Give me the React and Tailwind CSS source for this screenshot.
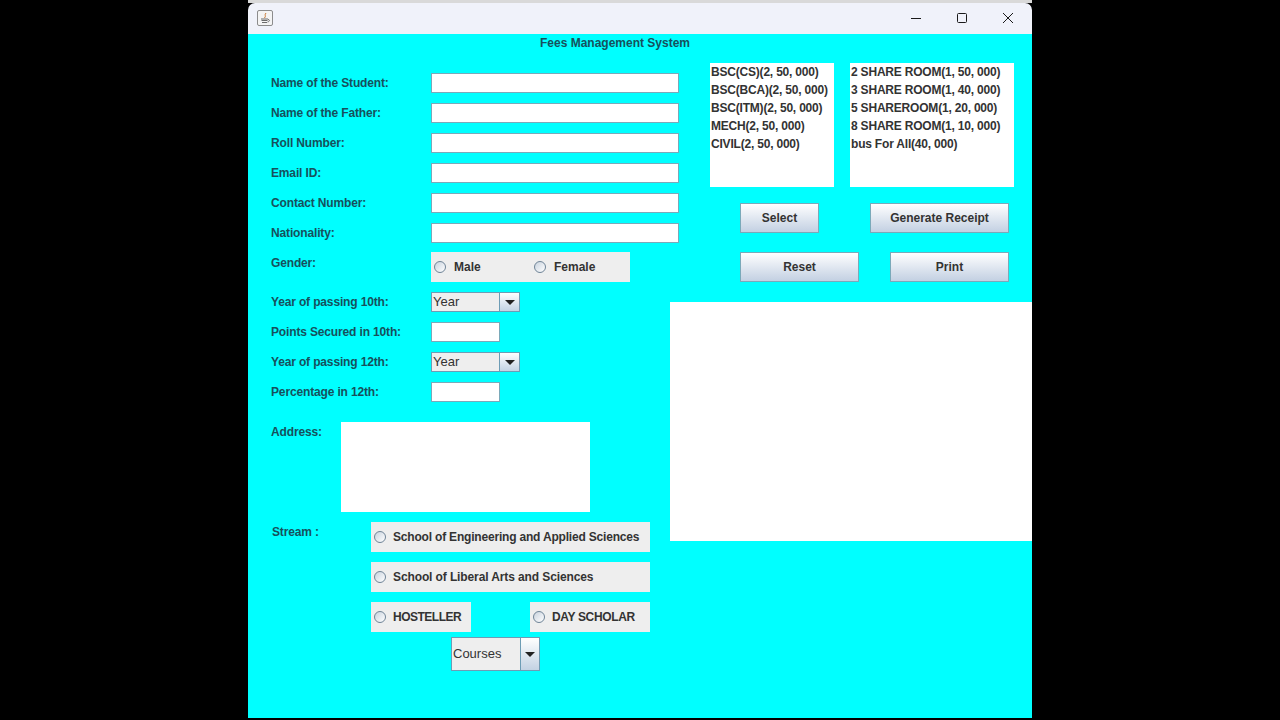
const labelClass = 'text-[12px] tracking-[-0.15px] font-bold text-[#17505c]';

function Radio() {
  return <span className="w-[12px] h-[12px] rounded-full border border-[#6f8497] bg-gradient-to-br from-[#c9d3de] to-white shrink-0" />;
}

function RadioPanel({ label, className }) {
  return (
    <div className={`h-[30px] bg-[#eeeeee] flex items-center gap-[7px] pl-[3px] text-[12px] font-bold text-[#333] ${className}`}>
      <Radio />
      <span>{label}</span>
    </div>
  );
}

function TextBox({ className }) {
  return <input readOnly className={`h-[20px] shrink-0 bg-white border border-[#7aa9b9] outline-none ${className}`} />;
}

function Combo({ label, className, arrowClass }) {
  return (
    <div className={`flex shrink-0 border border-[#6d9cb5] bg-[#eeeeee] text-[#333] ${className}`}>
      <span className="flex-1 flex items-center pl-[1px] text-[13px]">{label}</span>
      <span className={`flex items-center justify-center border-l border-[#6d9cb5] bg-gradient-to-b from-white to-[#c3d2e3] ${arrowClass}`}>
        <span className="w-0 h-0 border-x-[5px] border-x-transparent border-t-[5px] border-t-[#222]" />
      </span>
    </div>
  );
}

function FormRow({ label, children, className = 'mb-[10px]' }) {
  return (
    <div className={`flex items-center h-[20px] ${className}`}>
      <label className={`w-[160px] shrink-0 ${labelClass}`}>{label}</label>
      {children}
    </div>
  );
}

function JButton({ label, className }) {
  return (
    <button className={`h-[30px] border border-[#7aa9b9] bg-gradient-to-b from-white to-[#c3d0e2] text-[12px] font-bold text-[#333] ${className}`}>
      {label}
    </button>
  );
}

function ListBox({ items, className }) {
  return (
    <div className={`h-[124px] bg-white pl-[1px] text-[12px] tracking-[-0.2px] font-bold text-[#333] ${className}`}>
      {items.map((item) => (
        <div key={item} className="h-[18px] leading-[18px] whitespace-nowrap">{item}</div>
      ))}
    </div>
  );
}

export default function App() {
  return (
    <div className="w-[1280px] h-[720px] bg-black overflow-hidden font-['Liberation_Sans',Arial,sans-serif]">
      <div className="w-[784px] h-[718px] ml-[248px] flex flex-col">
        <div className="h-[3px] bg-[#d9d9d9]" />

        {/* title bar */}
        <div className="h-[31px] bg-[#f0f2fa] rounded-t-[7px] flex items-center justify-between">
          <div className="ml-[9px] mb-[2px] w-[16px] h-[16px] rounded-[2px] border border-[#8c8c8c] bg-[#f4f4f4] flex items-center justify-center">
            <svg width="12" height="12" viewBox="0 0 12 12" fill="none" stroke="#6b6b6b" strokeWidth="1">
              <path d="M7 1C5 3 7.500 4 5.500 6" stroke="#c8742c" />
              <path d="M2 7h7M2.500 8.500h6M3 10.500h5M9 7.500c2 0 2 2-.5 2.500" />
            </svg>
          </div>
          <div className="flex items-center mr-[1px] mb-[2px]">
            <span className="w-[46px] flex justify-center">
              <svg width="12" height="12" viewBox="0 0 12 12" stroke="#1a1a1a" strokeWidth="1"><path d="M1 6.500h10" /></svg>
            </span>
            <span className="w-[46px] flex justify-center">
              <svg width="12" height="12" viewBox="0 0 12 12" fill="none" stroke="#1a1a1a" strokeWidth="1"><rect x="1.500" y="1.500" width="9" height="9" rx="1" /></svg>
            </span>
            <span className="w-[46px] flex justify-center">
              <svg width="12" height="12" viewBox="0 0 12 12" stroke="#1a1a1a" strokeWidth="1"><path d="M1 1l10 10M11 1L1 11" /></svg>
            </span>
          </div>
        </div>

        {/* content */}
        <div className="flex-1 bg-[#00ffff]">
          <div className="w-[734px] h-[18px] leading-[18px] text-center text-[12px] font-bold text-[#17505c]">Fees Management System</div>

          <div className="flex">
            {/* form */}
            <div className="w-[422px] shrink-0 pl-[23px] pt-[21px]">
              <FormRow label="Name of the Student:"><TextBox className="w-[248px]" /></FormRow>
              <FormRow label="Name of the Father:"><TextBox className="w-[248px]" /></FormRow>
              <FormRow label="Roll Number:"><TextBox className="w-[248px]" /></FormRow>
              <FormRow label="Email ID:"><TextBox className="w-[248px]" /></FormRow>
              <FormRow label="Contact Number:"><TextBox className="w-[248px]" /></FormRow>
              <FormRow label="Nationality:" className="mb-[9px]"><TextBox className="w-[248px]" /></FormRow>

              <div className="flex h-[30px] mb-[10px]">
                <label className={`w-[160px] shrink-0 pt-[2px] ${labelClass}`}>Gender:</label>
                <div className="w-[199px] h-[30px] bg-[#eeeeee] flex items-center pl-[3px] text-[12px] font-bold text-[#333]">
                  <Radio />
                  <span className="ml-[8px] w-[80px]">Male</span>
                  <Radio />
                  <span className="ml-[8px]">Female</span>
                </div>
              </div>

              <FormRow label="Year of passing 10th:"><Combo label="Year" className="w-[89px] h-[20px]" arrowClass="w-[20px]" /></FormRow>
              <FormRow label="Points Secured in 10th:"><TextBox className="w-[69px]" /></FormRow>
              <FormRow label="Year of passing 12th:"><Combo label="Year" className="w-[89px] h-[20px]" arrowClass="w-[20px]" /></FormRow>
              <FormRow label="Percentage in 12th:" className="mb-[20px]"><TextBox className="w-[69px]" /></FormRow>

              <div className="flex h-[90px] mb-[10px]">
                <label className={`w-[70px] shrink-0 pt-[1px] ${labelClass}`}>Address:</label>
                <div className="w-[249px] h-[90px] bg-white" />
              </div>

              <div className="flex">
                <label className={`w-[100px] shrink-0 pl-[1px] pt-[1px] ${labelClass}`}>Stream :</label>
                <div className="w-[279px] flex flex-col gap-[10px]">
                  <RadioPanel label="School of Engineering and Applied Sciences" className="tracking-[-0.19px]" />
                  <RadioPanel label="School of Liberal Arts and Sciences" className="tracking-[-0.11px]" />
                  <div className="flex justify-between">
                    <RadioPanel label="HOSTELLER" className="w-[100px] tracking-[-0.5px]" />
                    <RadioPanel label="DAY SCHOLAR" className="w-[120px] tracking-[-0.35px]" />
                  </div>
                </div>
              </div>

              <Combo label="Courses" className="w-[89px] h-[34px] ml-[180px] mt-[5px]" arrowClass="w-[19px]" />
            </div>

            {/* lists, buttons and receipt */}
            <div className="flex-1 pt-[11px]">
              <div className="flex pl-[40px] gap-[16px]">
                <ListBox
                  className="w-[124px]"
                  items={['BSC(CS)(2, 50, 000)', 'BSC(BCA)(2, 50, 000)', 'BSC(ITM)(2, 50, 000)', 'MECH(2, 50, 000)', 'CIVIL(2, 50, 000)']}
                />
                <ListBox
                  className="w-[164px]"
                  items={['2 SHARE ROOM(1, 50, 000)', '3 SHARE ROOM(1, 40, 000)', '5 SHAREROOM(1, 20, 000)', '8 SHARE ROOM(1, 10, 000)', 'bus For All(40, 000)']}
                />
              </div>
              <div className="flex pl-[70px] gap-[51px] mt-[16px]">
                <JButton label="Select" className="w-[79px]" />
                <JButton label="Generate Receipt" className="w-[139px]" />
              </div>
              <div className="flex pl-[70px] gap-[31px] mt-[19px]">
                <JButton label="Reset" className="w-[119px]" />
                <JButton label="Print" className="w-[119px]" />
              </div>
              <div className="h-[239px] bg-white mt-[20px]" />
            </div>
          </div>
        </div>
      </div>
    </div>
  );
}
